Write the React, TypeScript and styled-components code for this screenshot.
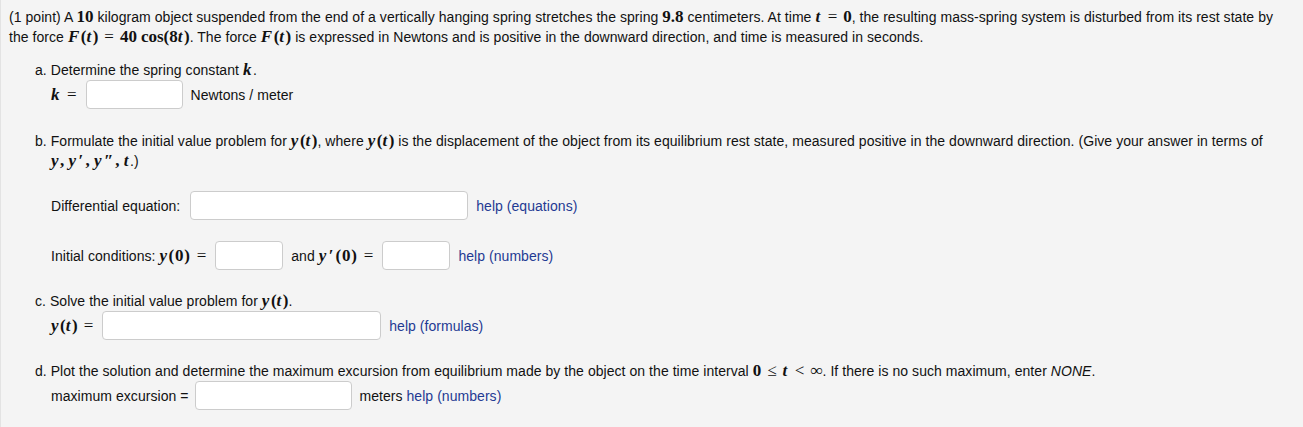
import React from 'react';
import styled, { createGlobalStyle } from 'styled-components';

const GlobalStyle = createGlobalStyle`
  html, body {
    margin: 0;
    padding: 0;
    background: #f4f4f4;
  }
  body {
    font-family: "Liberation Sans", Arial, sans-serif;
    font-size: 14px;
    letter-spacing: 0.05px;
    color: #111;
  }
`;

const ProblemContainer = styled.div`
  min-height: 427px;
  box-sizing: border-box;
  padding: 7px 20px 0 8px;
  border-left: 1px solid #e3e3e3;
  line-height: 20px;
`;

const Intro = styled.div`
  margin: 0;
`;

const Part = styled.div<{ $top?: number }>`
  margin: ${(p) => p.$top ?? 21}px 0 0 26px;
`;

const Continuation = styled.div`
  margin-left: 42px;
`;

const AnswerRow = styled.div<{ $top?: number }>`
  display: flex;
  align-items: center;
  height: 29px;
  margin: ${(p) => p.$top ?? 0}px 0 0 42px;
  white-space: nowrap;
`;

const AnswerBox = styled.input<{ $w: number }>`
  box-sizing: border-box;
  width: ${(p) => p.$w}px;
  height: 29px;
  margin: 0 8px 0 6px;
  padding: 4px 6px;
  border: 1px solid #cccccc;
  border-radius: 4px;
  background: #ffffff;
  font-family: "Liberation Sans", Arial, sans-serif;
  font-size: 13px;
  outline: none;
`;

const HelpLink = styled.a`
  color: #1f3a93;
  text-decoration: none;
  cursor: pointer;
`;

const Math = styled.span`
  font-family: "Liberation Serif", "DejaVu Serif", serif;
  font-size: 17px;
  line-height: 16px;
  font-weight: bold;
  letter-spacing: 0;
  white-space: nowrap;
`;

const Mi = styled.span`
  font-style: italic;
  padding-right: 1.5px;
`;

const Mo = styled.span<{ $end?: boolean }>`
  font-weight: normal;
  margin: 0 ${(p) => (p.$end ? 3 : 6)}px 0 6px;
`;

const Arg = styled.span`
  letter-spacing: 0.8px;
`;

const Prime = styled.span`
  margin: 0 2px 0 1px;
`;

const Gap = styled.span`
  display: inline-block;
  width: 4px;
`;

const App: React.FC = () => {
  return (
    <>
      <GlobalStyle />
      <ProblemContainer>
        <Intro>
          (1 point) A <Math>10</Math> kilogram object suspended from the end of a vertically hanging spring
          stretches the spring <Math>9.8</Math> centimeters. At time <Math><Mi>t</Mi><Mo>=</Mo>0</Math>, the
          resulting mass-spring system is disturbed from its rest state by the force{' '}
          <Math>
            <Mi>F</Mi>(<Mi>t</Mi>)<Mo>=</Mo>40<Gap />cos(8<Mi>t</Mi>)
          </Math>
          . The force <Math><Mi>F</Mi>(<Mi>t</Mi>)</Math> is expressed in Newtons and is positive in the
          downward direction, and time is measured in seconds.
        </Intro>

        <Part $top={13}>
          a. Determine the spring constant <Math><Mi>k</Mi></Math>.
        </Part>
        <AnswerRow>
          <Math><Mi>k</Mi><Mo $end>=</Mo></Math>
          <AnswerBox $w={97} />
          <span>Newtons / meter</span>
        </AnswerRow>

        <Part $top={22}>
          b. Formulate the initial value problem for <Math><Mi>y</Mi>(<Mi>t</Mi>)</Math>, where{' '}
          <Math><Mi>y</Mi>(<Mi>t</Mi>)</Math> is the displacement of the object from its equilibrium rest
          state, measured positive in the downward direction. (Give your answer in terms of
        </Part>
        <Continuation>
          <Math>
            <Mi>y</Mi>, <Mi>y</Mi><Prime>′</Prime>, <Mi>y</Mi><Prime>″</Prime>, <Mi>t</Mi>
          </Math>
          .)
        </Continuation>

        <AnswerRow $top={20}>
          <span>Differential equation:&nbsp;</span>
          <AnswerBox $w={278} />
          <HelpLink>help (equations)</HelpLink>
        </AnswerRow>

        <AnswerRow $top={21}>
          <span>Initial conditions:&nbsp;</span>
          <Math><Mi>y</Mi><Arg>(0)</Arg><Mo $end>=</Mo></Math>
          <AnswerBox $w={68} />
          <span>and&nbsp;</span>
          <Math><Mi>y</Mi><Prime>′</Prime><Arg>(0)</Arg><Mo $end>=</Mo></Math>
          <AnswerBox $w={68} />
          <HelpLink>help (numbers)</HelpLink>
        </AnswerRow>

        <Part $top={21}>
          c. Solve the initial value problem for <Math><Mi>y</Mi>(<Mi>t</Mi>)</Math>.
        </Part>
        <AnswerRow>
          <Math><Mi>y</Mi>(<Mi>t</Mi>)<Mo $end>=</Mo></Math>
          <AnswerBox $w={279} />
          <HelpLink>help (formulas)</HelpLink>
        </AnswerRow>

        <Part $top={21}>
          d. Plot the solution and determine the maximum excursion from equilibrium made by the object on the
          time interval{' '}
          <Math>
            0<Mo>≤</Mo><Mi>t</Mi><Mo>&lt;</Mo>∞
          </Math>
          . If there is no such maximum, enter <i>NONE</i>.
        </Part>
        <AnswerRow>
          <span>maximum excursion =</span>
          <AnswerBox $w={157} />
          <span>meters&nbsp;</span>
          <HelpLink>help (numbers)</HelpLink>
        </AnswerRow>
      </ProblemContainer>
    </>
  );
};

export default App;
